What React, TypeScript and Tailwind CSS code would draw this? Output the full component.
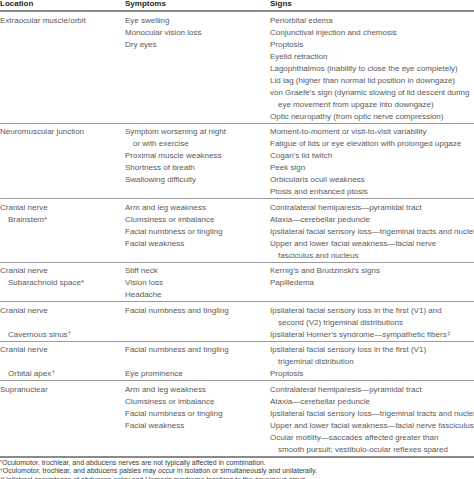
import React from "react";

type Line = { t: React.ReactNode; i?: boolean } | null;
type Row = { loc: Line[]; sym: Line[]; sig: Line[] };

const Sup = ({ c }: { c: string }) => (
  <span className="inline-block align-top text-[5.5px] leading-[8px] ml-[0.5px]">{c}</span>
);

const L = (t: React.ReactNode, i = false): Line => ({ t, i });

const rows: Row[] = [
  {
    loc: [L("Extraocular muscle/orbit")],
    sym: [L("Eye swelling"), L("Monocular vision loss"), L("Dry eyes")],
    sig: [
      L("Periorbital edema"),
      L("Conjunctival injection and chemosis"),
      L("Proptosis"),
      L("Eyelid retraction"),
      L("Lagophthalmos (inability to close the eye completely)"),
      L("Lid lag (higher than normal lid position in downgaze)"),
      L("von Graefe\u2019s sign (dynamic slowing of lid descent during"),
      L("eye movement from upgaze into downgaze)", true),
      L("Optic neuropathy (from optic nerve compression)"),
    ],
  },
  {
    loc: [L("Neuromuscular junction")],
    sym: [
      L("Symptom worsening at night"),
      L("or with exercise", true),
      L("Proximal muscle weakness"),
      L("Shortness of breath"),
      L("Swallowing difficulty"),
    ],
    sig: [
      L("Moment-to-moment or visit-to-visit variability"),
      L("Fatigue of lids or eye elevation with prolonged upgaze"),
      L("Cogan\u2019s lid twitch"),
      L("Peek sign"),
      L("Orbicularis oculi weakness"),
      L("Ptosis and enhanced ptosis"),
    ],
  },
  {
    loc: [L("Cranial nerve"), L("Brainstem*", true)],
    sym: [
      L("Arm and leg weakness"),
      L("Clumsiness or imbalance"),
      L("Facial numbness or tingling"),
      L("Facial weakness"),
    ],
    sig: [
      L("Contralateral hemiparesis\u2014pyramidal tract"),
      L("Ataxia\u2014cerebellar peduncle"),
      L("Ipsilateral facial sensory loss\u2014trigeminal tracts and nuclei"),
      L("Upper and lower facial weakness\u2014facial nerve"),
      L("fasciculus and nucleus", true),
    ],
  },
  {
    loc: [L("Cranial nerve"), L("Subarachnoid space*", true)],
    sym: [L("Stiff neck"), L("Vision loss"), L("Headache")],
    sig: [L("Kernig\u2019s and Brudzinski\u2019s signs"), L("Papilledema"), null],
  },
  {
    loc: [L("Cranial nerve"), null, L(<>{"Cavernous sinus"}<Sup c={"\u2020"} /></>, true)],
    sym: [L("Facial numbness and tingling")],
    sig: [
      L("Ipsilateral facial sensory loss in the first (V1) and"),
      L("second (V2) trigeminal distributions", true),
      L(<>{"Ipsilateral Horner\u2019s syndrome\u2014sympathetic fibers"}<Sup c={"\u2021"} /></>),
    ],
  },
  {
    loc: [L("Cranial nerve"), null, L(<>{"Orbital apex"}<Sup c={"\u2020"} /></>, true)],
    sym: [L("Facial numbness and tingling"), null, L("Eye prominence")],
    sig: [
      L("Ipsilateral facial sensory loss in the first (V1)"),
      L("trigeminal distribution", true),
      L("Proptosis"),
    ],
  },
  {
    loc: [L("Supranuclear")],
    sym: [
      L("Arm and leg weakness"),
      L("Clumsiness or imbalance"),
      L("Facial numbness or tingling"),
      L("Facial weakness"),
    ],
    sig: [
      L("Contralateral hemiparesis\u2014pyramidal tract"),
      L("Ataxia\u2014cerebellar peduncle"),
      L("Ipsilateral facial sensory loss\u2014trigeminal tracts and nuclei"),
      L("Upper and lower facial weakness\u2014facial nerve fasciculus and nucleus"),
      L("Ocular motility\u2014saccades affected greater than"),
      L("smooth pursuit; vestibulo-ocular reflexes spared", true),
    ],
  },
];

const Col = ({ lines, className }: { lines: Line[]; className: string }) => (
  <div className={className}>
    {lines.map((l, k) => (
      <div key={k} className={"h-[12px] whitespace-nowrap " + (l && l.i ? "pl-[8px]" : "")}>
        {l ? l.t : "\u00a0"}
      </div>
    ))}
  </div>
);

export default function App() {
  return (
    <div
      className="w-[474px] h-[479px] overflow-hidden bg-white text-[#5a5a5a] text-[8px] leading-[12px]"
      style={{ fontFamily: '"Liberation Sans", Arial, Helvetica, sans-serif' }}
    >
      <div className="flex -mt-[2px] border-b-2 border-[#8a8a8a] font-bold text-[#262626] h-[14px]">
        <div className="w-[125px] shrink-0">Location</div>
        <div className="w-[145px] shrink-0">Symptoms</div>
        <div className="flex-1">Signs</div>
      </div>
      {rows.map((r, idx) => (
        <div
          key={idx}
          className={
            "flex pt-[2.5px] " +
            (idx === rows.length - 1 ? "border-b-2 border-[#8a8a8a]" : "border-b border-[#9a9a9a]")
          }
        >
          <Col lines={r.loc} className="w-[125px] shrink-0" />
          <Col lines={r.sym} className="w-[145px] shrink-0" />
          <Col lines={r.sig} className="flex-1 min-w-0" />
        </div>
      ))}
      <div className="pt-[1px] text-[7px] leading-[8.5px] text-[#3a3a3a] whitespace-nowrap">
        <div>
          <span className="inline-block align-top text-[5px] leading-[6px]">*</span>
          {"Oculomotor, trochlear, and abducens nerves are not typically affected in combination."}
        </div>
        <div>
          <span className="inline-block align-top text-[5px] leading-[6px]">{"\u2020"}</span>
          {"Oculomotor, trochlear, and abducens palsies may occur in isolation or simultaneously and unilaterally."}
        </div>
        <div>
          <span className="inline-block align-top text-[5px] leading-[6px]">{"\u2021"}</span>
          {"Unilateral coexistence of abducens palsy and Horner\u2019s syndrome localizes to the cavernous sinus."}
        </div>
      </div>
    </div>
  );
}
